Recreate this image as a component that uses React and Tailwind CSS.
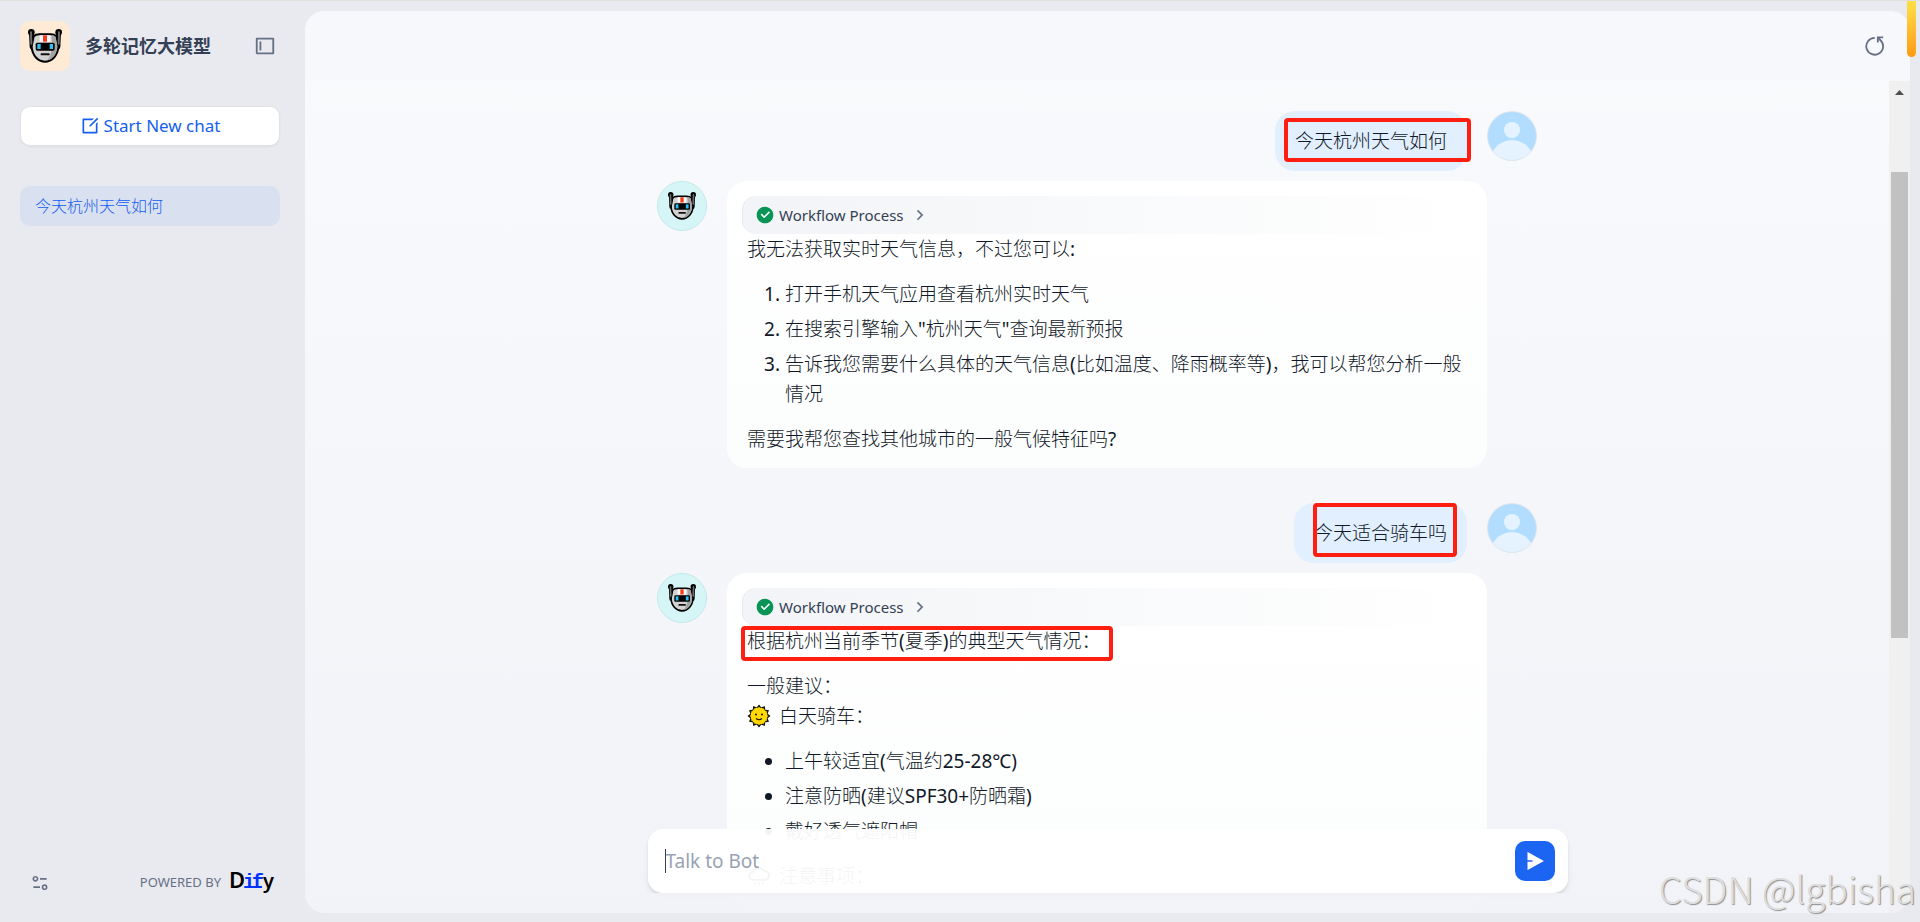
import React, { useState } from 'react';
import {
  RiLayoutLeft2Line,
  RiEditBoxLine,
  RiEqualizer2Line,
  RiCheckboxCircleFill,
  RiArrowRightSLine,
  RiSendPlane2Fill,
} from 'react-icons/ri';

const conversations = [{ id: 1, name: '今天杭州天气如何' }];

// ─── Drawings ────────────────────────────────────────────────────────────────
function Robot({ className }) {
  return (
    <svg viewBox="84 88 102 102" className={className} aria-hidden="true">
      <path d="M94 98 L96 142" stroke="#000" strokeWidth="14" strokeLinecap="round" />
      <path d="M176 98 L174 142" stroke="#000" strokeWidth="14" strokeLinecap="round" />
      <circle cx="94" cy="98" r="10" fill="#000" />
      <circle cx="176" cy="98" r="10" fill="#000" />
      <path
        d="M101 110 Q106 104 118 104 H152 Q164 104 169 110 L175 140 C174 168 155 186 135 186 C115 186 96 168 95 140 Z"
        fill="#d2d2d2"
        stroke="#000"
        strokeWidth="6"
      />
      <path d="M155 107 Q163 107 167 111 L172 140 C171 164 156 181 140 183 C154 170 158 150 155 107 Z" fill="#a3a3a3" />
      <path d="M93 98 L94 132" stroke="#6b6b6b" strokeWidth="6" strokeLinecap="round" />
      <path d="M177 98 L176 132" stroke="#6b6b6b" strokeWidth="6" strokeLinecap="round" />
      <rect x="119" y="107" width="32" height="19" fill="#fff" />
      <rect x="129" y="107" width="12" height="19" fill="#fb3a17" />
      <rect x="107" y="129" width="57" height="24" rx="5" fill="#000" />
      <rect x="112" y="133" width="10" height="15" fill="#26c3f5" />
      <rect x="149" y="133" width="10" height="15" fill="#26c3f5" />
      <rect x="122" y="161" width="27" height="6" rx="2" fill="#111" />
    </svg>
  );
}

function UserAvatar() {
  return (
    <svg viewBox="0 0 50 50" className="size-[50px] shrink-0" aria-hidden="true">
      <defs>
        <clipPath id="user-circle">
          <circle cx="25" cy="25" r="24.5" />
        </clipPath>
      </defs>
      <g clipPath="url(#user-circle)">
        <rect width="50" height="50" fill="#b2ddff" />
        <circle cx="25" cy="19" r="8" fill="#e4f3ff" />
        <circle cx="25" cy="51" r="22" fill="#e4f3ff" />
      </g>
      <circle cx="25" cy="25" r="24.5" fill="none" stroke="#dfe5ec" />
    </svg>
  );
}

function Sun() {
  const rays = Array.from({ length: 12 }, (_, i) => i * 30);
  return (
    <svg viewBox="0 0 24 24" className="mr-2 -mt-1 inline-block size-6 align-middle" aria-hidden="true">
      {rays.map((a) => (
        <path key={a} d="M9.4 5 L12 1.6 L14.6 5 Z" fill="#fc0" stroke="#111" strokeWidth="1.4" transform={`rotate(${a} 12 12)`} />
      ))}
      <circle cx="12" cy="12" r="8.4" fill="#ffd800" />
      <circle cx="9" cy="10.5" r="1" fill="#111" />
      <circle cx="15" cy="10.5" r="1" fill="#111" />
      <path d="M9 14.5 Q12 17 15 14.5" fill="none" stroke="#111" strokeWidth="1.2" />
    </svg>
  );
}

function RainCloud() {
  return (
    <svg viewBox="0 0 24 24" className="mr-2 -mt-1 inline-block size-6 align-middle" aria-hidden="true">
      <path d="M6 16 a4 4 0 0 1 0-8 a6 6 0 0 1 11-1 a4.5 4.5 0 0 1 1 9 Z" fill="#eee" stroke="#111" strokeWidth="1.5" />
      <path d="M8 18 v3 M12 18 v3 M16 18 v3" stroke="#3a9" strokeWidth="2" />
    </svg>
  );
}

function ResetIcon() {
  return (
    <svg viewBox="0 0 20 20" className="size-5" fill="none" stroke="#667085" strokeWidth="1.8" aria-hidden="true">
      <path d="M9.8 1.9 A8.4 8.4 0 1 0 14.9 3.7" />
      <path d="M18.2 1.4 H12.8 V6.6" />
      <path d="M13 1.6 L15.4 4.2" />
    </svg>
  );
}

function DifyLogo() {
  return (
    <svg viewBox="0 0 52 36" className="h-9 w-[52px]" role="img" aria-label="Dify">
      <text x="4" y="23" fontFamily="Noto Sans" fontSize="22" fontWeight="600" fill="#000">D</text>
      <text x="18" y="23" fontFamily="Liberation Mono" fontSize="20" fontWeight="700" fill="#0033ff">i</text>
      <text x="27" y="23" fontFamily="Liberation Mono" fontSize="20" fontWeight="700" fill="#0033ff">f</text>
      <rect x="20" y="21" width="17" height="2" fill="#0033ff" />
      <text x="38" y="23" fontFamily="Noto Sans" fontSize="20" fontWeight="600" fill="#000">y</text>
    </svg>
  );
}

// ─── Chat pieces ─────────────────────────────────────────────────────────────
// Red frame drawn over a piece of the conversation
function Mark({ className }) {
  return <span className={`pointer-events-none absolute rounded-sm border-4 border-[#ff1e10] ${className}`} />;
}

function Question({ text, mark }) {
  return (
    <div className="mb-2.5 flex justify-end gap-5">
      <div className="relative rounded-[20px] bg-[#e1effe] px-5 py-[15px]">
        {text}
        <Mark className={mark} />
      </div>
      <UserAvatar />
    </div>
  );
}

function Answer({ children }) {
  return (
    <div className="mb-[35px] flex gap-5">
      <div className="flex size-[50px] shrink-0 items-center justify-center rounded-full border border-[#c4e9ea] bg-[#d5f5f6]">
        <Robot className="size-7" />
      </div>
      <div className="mr-[50px] min-w-0 flex-1 rounded-[20px] bg-linear-to-b from-white to-[#fcfdfd] px-[15px] pt-[15px] pb-[14px]">
        <button className="flex h-[38px] w-full items-center gap-1 rounded-[14px] border-l border-[#e6e9ee] bg-linear-to-r from-[#f2f4f7] to-white pl-3 text-[15px] text-[#344054]">
          <RiCheckboxCircleFill className="size-5 text-[#079455]" />
          Workflow Process
          <RiArrowRightSLine className="ml-0.5 size-5 text-[#667085]" />
        </button>
        <div className="space-y-[15px] px-[5px]">{children}</div>
      </div>
    </div>
  );
}

function Sidebar() {
  return (
    <aside className="flex w-[305px] shrink-0 flex-col px-5 pb-[21px]">
      <div className="flex items-center pt-5">
        <div className="flex size-[50px] items-center justify-center rounded-[10px] bg-[#ffead5]">
          <Robot className="size-[34px]" />
        </div>
        <h1 className="ml-[15px] flex-1 text-lg font-bold text-[#344054]">多轮记忆大模型</h1>
        <button aria-label="Collapse sidebar" className="mr-[9px] text-[#667085]">
          <RiLayoutLeft2Line className="size-[22px]" />
        </button>
      </div>

      <button className="mt-[35px] flex h-10 w-[260px] items-center justify-center gap-1 rounded-[10px] border border-[#e0e2e7] bg-white text-[17px] text-[#155eef] shadow-xs">
        <RiEditBoxLine className="size-5" />
        Start New chat
      </button>

      <nav className="mt-10 w-[260px]">
        {conversations.map((c) => (
          <a key={c.id} href="#" className="flex h-10 items-center rounded-[10px] bg-[#d9e0f0] px-[15px] text-base font-light text-[#155eef]">
            {c.name}
          </a>
        ))}
      </nav>

      <div className="mt-auto flex w-[260px] items-center pr-[3px] pl-[10px]">
        <button aria-label="Settings" className="text-[#667085]">
          <RiEqualizer2Line className="size-5" />
        </button>
        <span className="mr-1 ml-auto text-[13px] text-[#667085]">POWERED BY</span>
        <DifyLogo />
      </div>
    </aside>
  );
}

function App() {
  const [message, setMessage] = useState('');

  return (
    <div className="relative flex h-screen overflow-hidden border-t border-[#dfdfdd] bg-[#e9eaf0] font-['Noto_Sans','Noto_Sans_CJK_SC',sans-serif] text-[#101828]">
      <Sidebar />

      <main className="relative mt-2.5 mr-2.5 mb-[9px] flex min-w-0 flex-1 flex-col overflow-hidden rounded-[20px] bg-linear-to-b from-[#f9fafc] to-[#f2f3f8]">
        <header className="flex h-[70px] shrink-0 items-center justify-end bg-[#f7f8fb] pr-[25px]">
          <button aria-label="Reset conversation" className="flex items-center">
            <ResetIcon />
          </button>
        </header>

        <div className="flex min-h-0 flex-1">
          {/* Messages */}
          <div className="min-w-0 flex-1 overflow-hidden pt-[30px] font-['Noto_Sans','Noto_Sans_CJK_SC_Light','Noto_Sans_CJK_SC',sans-serif] text-[19px] leading-[30px]">
            <div className="mx-auto w-full max-w-[880px]">
              <Question text="今天杭州天气如何" mark="top-[7px] right-[-4px] bottom-[9px] left-[9px]" />
              <Answer>
                <p>我无法获取实时天气信息，不过您可以:</p>
                <ol className="list-decimal space-y-[5px] pl-[38px]">
                  <li>打开手机天气应用查看杭州实时天气</li>
                  <li>在搜索引擎输入"杭州天气"查询最新预报</li>
                  <li>告诉我您需要什么具体的天气信息(比如温度、降雨概率等)，我可以帮您分析一般情况</li>
                </ol>
                <p>需要我帮您查找其他城市的一般气候特征吗?</p>
              </Answer>

              <Question text="今天适合骑车吗" mark="top-0 right-2.5 bottom-[6px] left-[19px]" />
              <Answer>
                <p className="relative">
                  根据杭州当前季节(夏季)的典型天气情况：
                  <Mark className="top-0 bottom-[-5px] left-[-6px] w-[372px]" />
                </p>
                <p>
                  一般建议：
                  <br />
                  <Sun />
                  白天骑车：
                </p>
                <ul className="list-disc space-y-[5px] pl-[38px]">
                  <li>上午较适宜(气温约25-28℃)</li>
                  <li>注意防晒(建议SPF30+防晒霜)</li>
                  <li>戴好透气遮阳帽</li>
                </ul>
                <p>
                  <RainCloud />
                  注意事项：
                </p>
              </Answer>
            </div>
          </div>

          {/* Scrollbar */}
          <div className="flex w-[21px] shrink-0 flex-col items-center bg-[#f0f0f0]">
            <svg viewBox="0 0 9 5" className="mt-[9px] h-[5px] w-[9px]" aria-hidden="true">
              <path d="M0 5 L4.5 0 L9 5 Z" fill="#505050" />
            </svg>
            <div className="mt-[77px] h-[56%] w-[17px] bg-[#c1c1c1]" />
          </div>
        </div>

        {/* Composer floats over the end of the conversation */}
        <div className="absolute inset-x-0 bottom-0">
          <form
            onSubmit={(e) => e.preventDefault()}
            className="mx-auto flex h-16 w-full max-w-[920px] items-center rounded-[15px] bg-white/95 pr-[13px] pl-[17px] shadow-md"
          >
            <span className="h-6 w-px bg-[#344054]" />
            <input
              type="text"
              aria-label="Message"
              placeholder="Talk to Bot"
              value={message}
              onChange={(e) => setMessage(e.target.value)}
              className="min-w-0 flex-1 bg-transparent text-[19px] outline-none placeholder:text-[#98a2b3]"
            />
            <button aria-label="Send" className="flex size-10 items-center justify-center rounded-[10px] bg-[#1c64f2] text-white">
              <RiSendPlane2Fill className="size-5" />
            </button>
          </form>
          <div className="mr-[21px] h-5 bg-[#f2f3f8]/90" />
        </div>
      </main>

      <div className="absolute top-0 right-1 h-14 w-[9px] rounded-b-full bg-linear-to-b from-[#fde047] to-[#ff9a10]" />
      <div className="pointer-events-none absolute right-1 bottom-3 font-['Noto_Sans_CJK_SC',sans-serif] text-[37px] leading-[44px] font-light text-[#dedede] [text-shadow:1px_1px_1px_#8f8f8f]">
        CSDN @lgbisha
      </div>
    </div>
  );
}

export default App;
